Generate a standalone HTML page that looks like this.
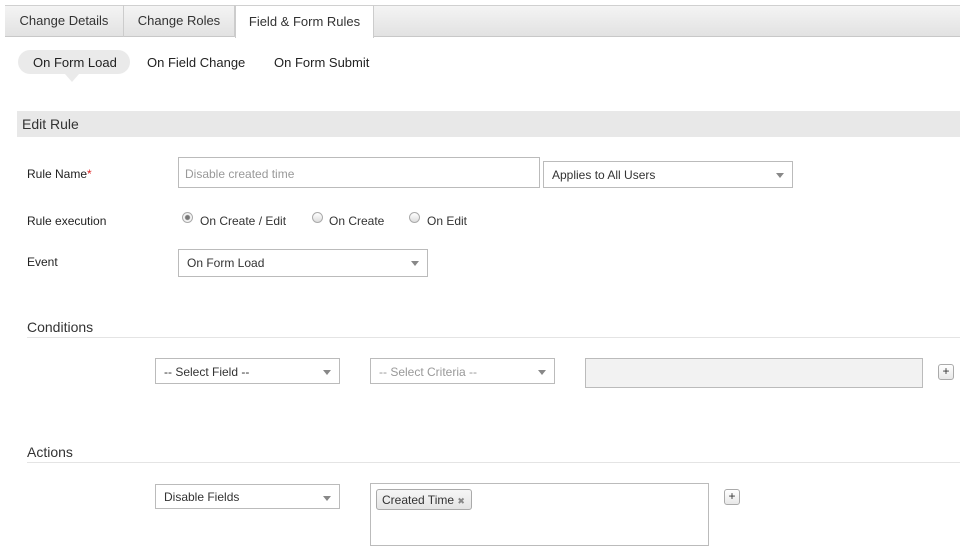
<!DOCTYPE html>
<html><head><style>
*{box-sizing:border-box;margin:0;padding:0}
body{width:960px;height:555px;background:#fff;font-family:"Liberation Sans",sans-serif;color:#333;position:relative;overflow:hidden;font-size:12px}
.a{position:absolute}
.tabbar{left:5px;top:5px;width:955px;height:32px;background:linear-gradient(#f4f4f4,#e2e2e2);border-top:1px solid #d0d0d0;border-bottom:1px solid #c8c8c8}
.tab{top:5px;height:32px;line-height:31px;font-size:13px;text-align:center;color:#333;border-right:1px solid #ccc}
.sel{border:1px solid #bbb;background:#fff;height:27px;line-height:27px;padding-left:8px;font-size:12px;color:#333}
.sel:after{content:"";position:absolute;right:8px;top:11px;border-left:4px solid transparent;border-right:4px solid transparent;border-top:5px solid #888}
.lbl{font-size:12px;color:#222}
.radio{width:11px;height:11px;border-radius:50%;border:1px solid #aaa;background:linear-gradient(#fff,#ddd)}
.hd{font-size:14px;color:#333}
.line{height:1px;background:#e4e4e4}
.plus{width:16px;height:16px;border:1px solid #aaa;border-radius:3px;background:linear-gradient(#fff,#e8e8e8);font-size:12px;line-height:13px;text-align:center;color:#333}
</style></head><body>
<div class="a tabbar"></div>
<div class="a tab" style="left:5px;width:119px">Change Details</div>
<div class="a tab" style="left:124px;width:111px">Change Roles</div>
<div class="a tab" style="left:235px;width:139px;background:#fff;border-left:1px solid #ccc;height:33px;top:5px;border-top:1px solid #d0d0d0">Field &amp; Form Rules</div>

<div class="a" style="left:18px;top:50px;width:112px;height:24px;border-radius:12px;background:#eaeaea"></div>
<div class="a" style="left:65px;top:74px;border-left:7px solid transparent;border-right:7px solid transparent;border-top:8px solid #eaeaea"></div>
<div class="a" style="left:33px;top:55px;font-size:13px;color:#222">On Form Load</div>
<div class="a" style="left:147px;top:55px;font-size:13px;color:#222">On Field Change</div>
<div class="a" style="left:274px;top:55px;font-size:13px;color:#222">On Form Submit</div>

<div class="a" style="left:17px;top:111px;width:943px;height:26px;background:#e8e8e8"></div>
<div class="a hd" style="left:22px;top:116px">Edit Rule</div>

<div class="a lbl" style="left:27px;top:167px">Rule Name<span style="color:#d22">*</span></div>
<div class="a" style="left:178px;top:157px;width:362px;height:31px;border:1px solid #bbb;padding:9px 6px;color:#999">Disable created time</div>
<div class="a sel" style="left:543px;top:161px;width:250px">Applies to All Users</div>

<div class="a lbl" style="left:27px;top:214px">Rule execution</div>
<div class="a radio" style="left:182px;top:212px;background:radial-gradient(#777 2px,#f4f4f4 3px)"></div>
<div class="a lbl" style="left:200px;top:214px;color:#333">On Create / Edit</div>
<div class="a radio" style="left:312px;top:212px"></div>
<div class="a lbl" style="left:329px;top:214px;color:#333">On Create</div>
<div class="a radio" style="left:409px;top:212px"></div>
<div class="a lbl" style="left:427px;top:214px;color:#333">On Edit</div>

<div class="a lbl" style="left:27px;top:255px">Event</div>
<div class="a sel" style="left:178px;top:249px;width:250px;height:28px">On Form Load</div>

<div class="a hd" style="left:27px;top:319px">Conditions</div>
<div class="a line" style="left:27px;top:337px;width:933px"></div>
<div class="a sel" style="left:155px;top:358px;width:185px;height:26px;line-height:26px">-- Select Field --</div>
<div class="a sel" style="left:370px;top:358px;width:185px;height:26px;line-height:26px;color:#999">-- Select Criteria --</div>
<div class="a" style="left:585px;top:358px;width:338px;height:30px;border:1px solid #bbb;background:#f2f2f2"></div>
<div class="a plus" style="left:938px;top:364px">+</div>

<div class="a hd" style="left:27px;top:444px">Actions</div>
<div class="a line" style="left:27px;top:462px;width:933px"></div>
<div class="a sel" style="left:155px;top:484px;width:185px;height:25px;line-height:25px">Disable Fields</div>
<div class="a" style="left:370px;top:483px;width:339px;height:63px;border:1px solid #bbb"></div>
<div class="a" style="left:376px;top:489px;width:96px;height:21px;border:1px solid #aaa;border-radius:3px;background:linear-gradient(#f6f6f6,#e4e4e4);padding:3px 5px;color:#333;white-space:nowrap;font-size:12px">Created Time <span style="color:#888;font-size:9px">✖</span></div>
<div class="a plus" style="left:724px;top:489px">+</div>
</body></html>
